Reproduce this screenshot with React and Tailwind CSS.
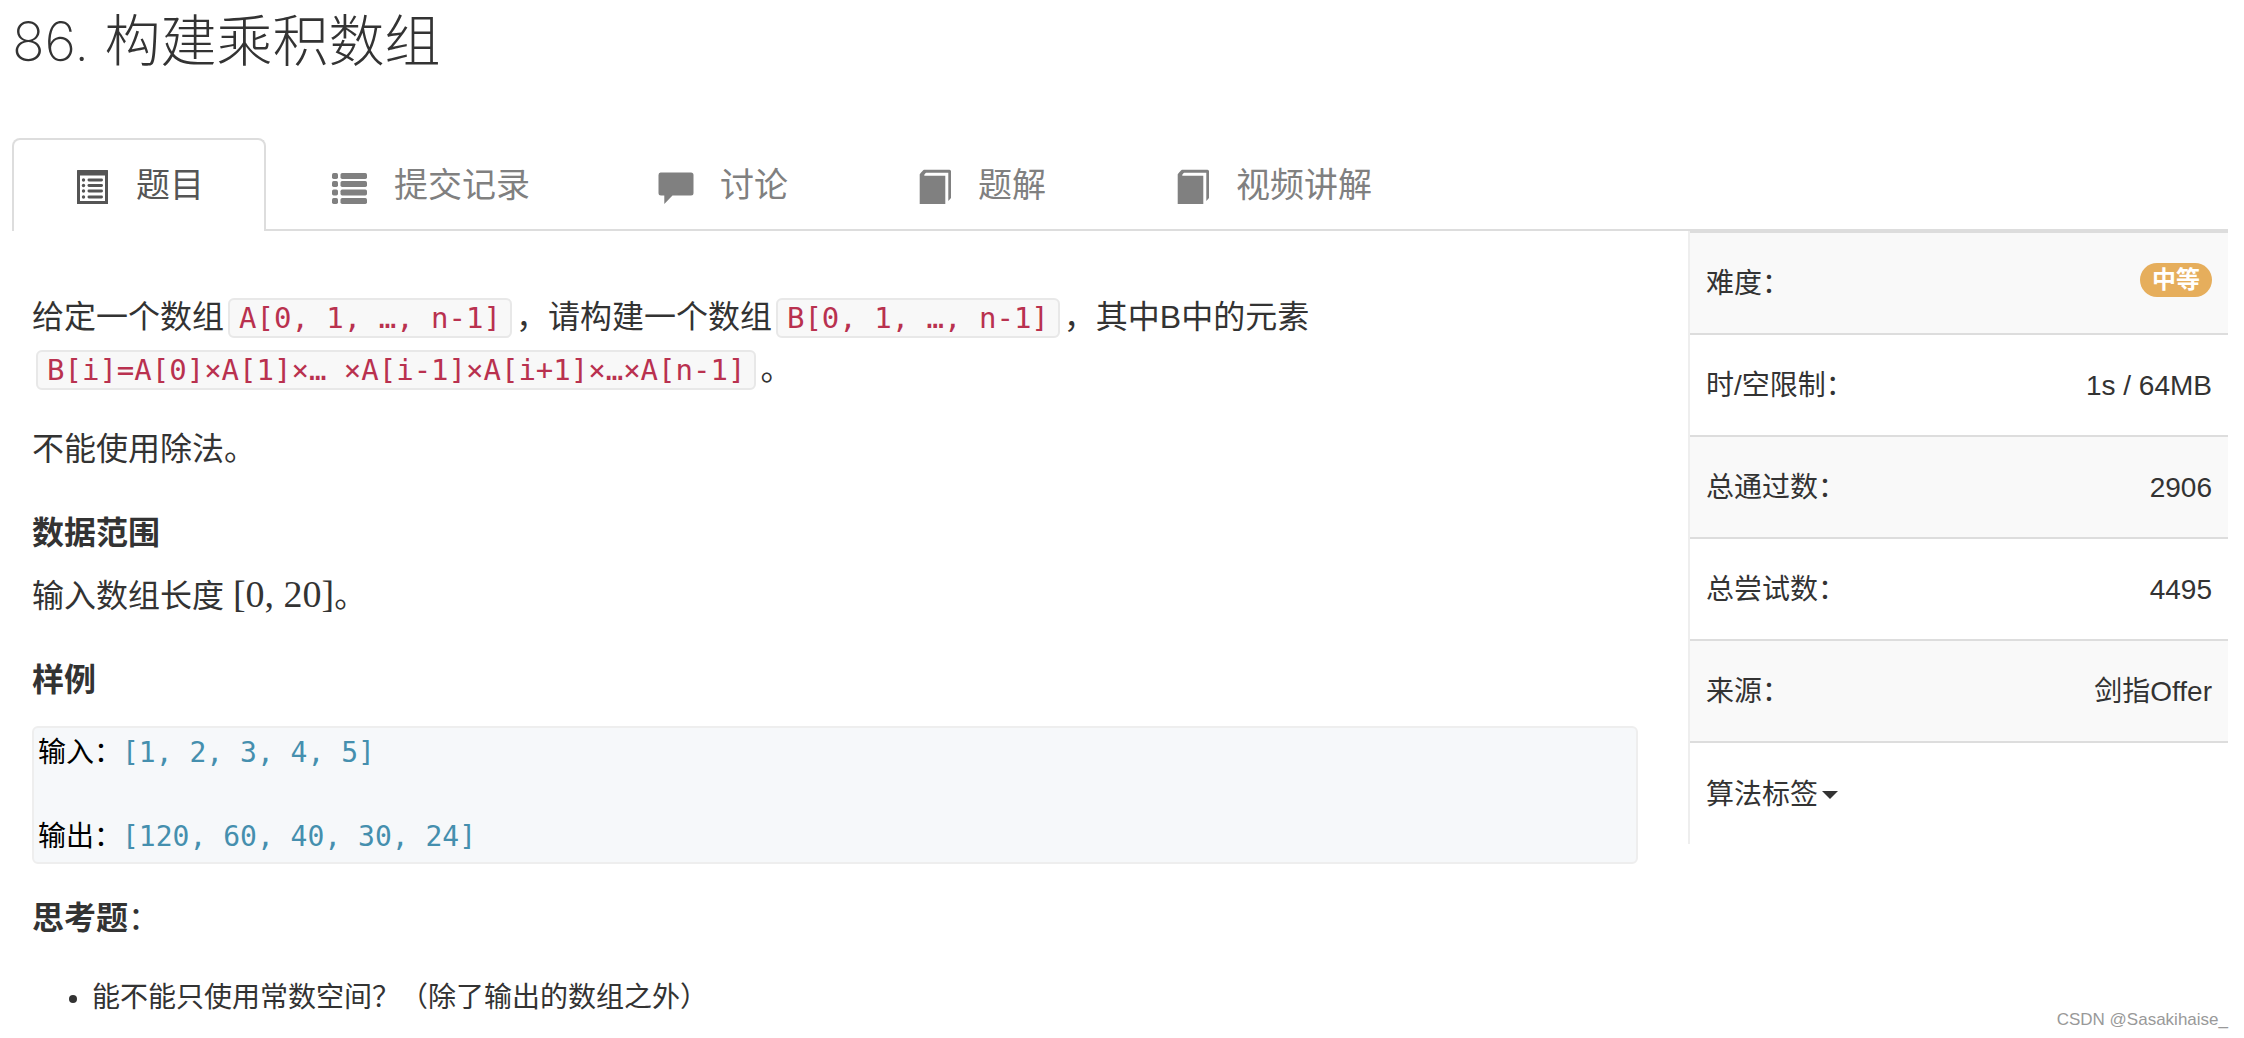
const SANS = "font-['Liberation_Sans','Noto_Sans_CJK_SC',sans-serif]";

function ListAltIcon() {
  return (
    <svg viewBox="0 1 36 40" className="h-10 w-9" fill="currentColor" aria-hidden="true">
      <path fillRule="evenodd" d="M3.500 5H33.500a.5.5 0 0 1 .5.5V38.500a.5.5 0 0 1-.5.5H3.500a.5.5 0 0 1-.5-.5V5.500a.5.5 0 0 1 .5-.5ZM6 10.500V36H31V10.500Z" />
      {[15, 20.5, 26, 32].map((y) => (
        <g key={y}>
          <circle cx="9.500" cy={y} r="1.700" />
          <rect x="13.500" y={y - 1.4} width="15.500" height="2.800" rx="1.400" />
        </g>
      ))}
    </svg>
  );
}

function ListIcon() {
  return (
    <svg viewBox="0 1 36 40" className="h-10 w-9" fill="currentColor" aria-hidden="true">
      {[8, 16, 24.5, 33].map((y) => (
        <g key={y}>
          <rect x="0" y={y} width="6" height="6" rx="1.700" />
          <rect x="8.500" y={y} width="26.500" height="6" rx="1.700" />
        </g>
      ))}
    </svg>
  );
}

function CommentIcon() {
  return (
    <svg viewBox="0 1 36 40" className="h-10 w-9" fill="currentColor" aria-hidden="true">
      <path d="M2.500 7.500H33a2.500 2.500 0 0 1 2.500 2.500V28a2.500 2.500 0 0 1-2.500 2.500H14.500L6.300 39V30.500H3A2.500 2.500 0 0 1 .5 28V10a2.500 2.500 0 0 1 2-2.500Z" />
    </svg>
  );
}

function BookIcon() {
  return (
    <svg viewBox="0 1 36 40" className="h-10 w-9" fill="currentColor" aria-hidden="true">
      <path d="M3.700 39V9.500C4 8.500 7 5.300 8 4.700H33.500A1.600 1.600 0 0 1 35 6.200V33L32.300 36V7.800H10.200C9.200 8.300 8 9.700 8.300 10.700H29.300V39Z" />
    </svg>
  );
}

const tabs = [
  { label: "题目", Icon: ListAltIcon, active: true },
  { label: "提交记录", Icon: ListIcon },
  { label: "讨论", Icon: CommentIcon },
  { label: "题解", Icon: BookIcon },
  { label: "视频讲解", Icon: BookIcon },
];

const facts = [
  ["难度：", <span className="-mt-2 rounded-full bg-[#e6ae5c] px-3 text-2xl leading-[34px] font-bold text-white">中等</span>],
  ["时/空限制：", "1s / 64MB"],
  ["总通过数：", "2906"],
  ["总尝试数：", "4495"],
  ["来源：", "剑指Offer"],
];

function Code({ children }) {
  return (
    <code className="mx-1 rounded-md border-2 border-[#e8e8e8] bg-[#f8f8f8] px-[9px] py-px font-['DejaVu_Sans_Mono',monospace] text-[29px] leading-8 whitespace-nowrap text-[#b9314f]">
      {children}
    </code>
  );
}

export default function App() {
  return (
    <div className={`${SANS} relative min-h-screen bg-white pr-4 pl-3 text-[32px] text-[#333]`} lang="zh-CN">
      <h1 className="pt-0.5 font-['Noto_Sans_CJK_SC',sans-serif] text-[56px] leading-[70px] font-light">
        <span className="font-['Inter',sans-serif] text-[54px] leading-none font-extralight">86. </span>
        构建乘积数组
      </h1>

      <nav className="mt-[66px] flex gap-1 border-b-2 border-[#ddd]">
        {tabs.map(({ label, Icon, active }) => (
          <a
            key={label}
            href="#"
            aria-current={active ? "page" : undefined}
            className={
              active
                ? "-mb-0.5 flex h-[93px] items-center gap-[26px] rounded-t-lg border-2 border-b-0 border-[#ddd] bg-white px-[60px] text-[34px] text-[#555]"
                : "flex h-[91px] items-center gap-[26px] px-[62px] pt-1 text-[34px] text-[#808080]"
            }
          >
            <Icon />
            {label}
          </a>
        ))}
      </nav>

      <div className="flex items-start">
        <main className="min-w-0 flex-1 pr-[50px] pl-5">
          <p className="mt-[60px] leading-[52px]">
            给定一个数组<Code>A[0, 1, …, n-1]</Code>，请构建一个数组<Code>B[0, 1, …, n-1]</Code>，其中B中的元素
            <br />
            <Code>B[i]=A[0]×A[1]×… ×A[i-1]×A[i+1]×…×A[n-1]</Code>。
          </p>
          <p className="mt-7 leading-[52px]">不能使用除法。</p>
          <h2 className="mt-8 leading-[52px] font-bold">数据范围</h2>
          <p className="mt-[11px] leading-[52px]">
            输入数组长度 <span className="font-['Liberation_Serif',serif] text-[38px] leading-none">[0, 20]</span>。
          </p>
          <h2 className="mt-8 leading-[52px] font-bold">样例</h2>
          <pre className="mt-5 rounded-md border-2 border-[#eee] bg-[#f6f8fa] p-1 font-['DejaVu_Sans_Mono','Noto_Sans_CJK_SC',monospace] text-[28px] leading-[42px] text-[#458fae]">
            <span className="text-black">输入：</span>[1, 2, 3, 4, 5]{"\n\n"}
            <span className="text-black">输出：</span>[120, 60, 40, 30, 24]
          </pre>
          <h2 className="mt-7 leading-[52px] font-bold">
            思考题<span className="font-normal">：</span>
          </h2>
          <ul className="mt-7 list-disc pl-[60px] text-[28px] leading-[52px]">
            <li>能不能只使用常数空间？（除了输出的数组之外）</li>
          </ul>
        </main>

        <aside className="w-[540px] shrink-0 border-l-2 border-[#eee] text-[28px]">
          <table className="w-full border-collapse">
            <tbody>
              {facts.map(([name, value]) => (
                <tr key={name} className="h-[102px] border-t-2 border-[#ddd] odd:bg-[#f9f9f9]">
                  <th scope="row" className="px-4 pt-0.5 text-left font-normal">{name}</th>
                  <td className="px-4 pt-0.5">
                    <div className="flex justify-end">{value}</div>
                  </td>
                </tr>
              ))}
              <tr className="h-[102px] border-t-2 border-[#ddd]">
                <td colSpan={2} className="px-4 pt-0.5">
                  <button type="button" className="flex items-center gap-1">
                    算法标签
                    <svg viewBox="0 0 16 8" className="h-2 w-4" fill="currentColor" aria-hidden="true">
                      <path d="M0 0H16L8 8Z" />
                    </svg>
                  </button>
                </td>
              </tr>
            </tbody>
          </table>
        </aside>
      </div>

      <div className="absolute right-4 bottom-1.5 text-[17px] leading-6 text-[#999]">CSDN @Sasakihaise_</div>
    </div>
  );
}
